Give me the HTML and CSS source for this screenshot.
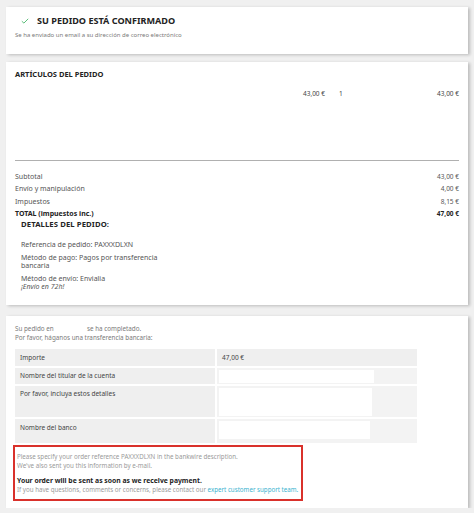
FILE: index.html
```html
<!DOCTYPE html>
<html lang="es">
<head>
<meta charset="utf-8">
<title>Pedido confirmado</title>
<link rel="stylesheet" href="styles.css">
</head>
<body>
<main class="page">
  <section class="card card-confirm">
    <h1 class="confirm-title">
      <svg class="check" viewBox="0 0 8 6" width="8" height="6" aria-hidden="true"><path d="M0.8 3.2 L2.9 5.1 L7.2 0.8" fill="none" stroke="#5cbf7a" stroke-width="1"/></svg>
      SU PEDIDO ESTÁ CONFIRMADO
    </h1>
    <p class="confirm-sub">Se ha enviado un email a su dirección de correo electrónico</p>
  </section>

  <section class="card card-order">
    <h2 class="section-title">ARTÍCULOS DEL PEDIDO</h2>
    <div class="item">
      <div class="item-info"></div>
      <div class="item-price">43,00 €</div>
      <div class="item-qty">1</div>
      <div class="item-total">43,00 €</div>
    </div>
    <hr class="divider">
    <div class="totals">
      <div class="total-row"><span>Subtotal</span><span>43,00 €</span></div>
      <div class="total-row"><span>Envío y manipulación</span><span>4,00 €</span></div>
      <div class="total-row"><span>Impuestos</span><span>8,15 €</span></div>
      <div class="total-row grand"><span>TOTAL (impuestos inc.)</span><span>47,00 €</span></div>
    </div>
    <div class="details">
      <h3 class="details-title">DETALLES DEL PEDIDO:</h3>
      <ul class="details-list">
        <li>Referencia de pedido: PAXXXDLXN</li>
        <li>Método de pago: Pagos por transferencia bancaria</li>
        <li>Método de envío: Envialia<br><em>¡Envío en 72h!</em></li>
      </ul>
    </div>
  </section>

  <section class="card card-payment">
    <p class="pay-intro">Su pedido en <span class="shop-name"></span> se ha completado.<br>Por favor, háganos una transferencia bancaria:</p>
    <div class="bank-table">
      <div class="bank-row row-amount">
        <div class="bank-label">Importe</div>
        <div class="bank-value">47,00 €</div>
      </div>
      <div class="bank-row row-owner">
        <div class="bank-label">Nombre del titular de la cuenta</div>
        <div class="bank-value"><span class="blank-box box-owner"></span></div>
      </div>
      <div class="bank-row row-details">
        <div class="bank-label">Por favor, incluya estos detalles</div>
        <div class="bank-value"><span class="blank-box box-details"></span></div>
      </div>
      <div class="bank-row row-bank">
        <div class="bank-label">Nombre del banco</div>
        <div class="bank-value"><span class="blank-box box-bank"></span></div>
      </div>
    </div>
    <div class="notice">
      <p class="notice-muted">Please specify your order reference PAXXXDLXN in the bankwire description.<br>We've also sent you this information by e-mail.</p>
      <p class="notice-strong">Your order will be sent as soon as we receive payment.</p>
      <p class="notice-muted">If you have questions, comments or concerns, please contact our <a class="link" href="#">expert customer support team.</a></p>
    </div>
  </section>
</main>
</body>
</html>
```

FILE: styles.css
```css
* { box-sizing: border-box; }

html, body {
  margin: 0;
  padding: 0;
  background: #f0f0f0;
  font-family: "Noto Sans", "Open Sans", "DejaVu Sans", sans-serif;
  color: #555;
  font-size: 7px;
}

.page {
  display: flex;
  flex-direction: column;
  padding: 7px 6px 0 6px;
}

.card {
  background: #fff;
  box-shadow: 2px 1px 3px rgba(0, 0, 0, 0.22);
}

/* ---- confirmation ---- */
.card-confirm {
  height: 47px;
  padding: 7px 9px 0 9px;
}

.confirm-title {
  margin: 0;
  display: flex;
  align-items: center;
  font-size: 9.1px;
  line-height: 14px;
  font-weight: 700;
  color: #232323;
  padding-left: 6px;
}

.check {
  margin-right: 8px;
  display: block;
}

.confirm-sub {
  margin: 3px 0 0 0;
  font-size: 6px;
  line-height: 9px;
  color: #7a7a7a;
}

/* ---- order ---- */
.card-order {
  margin-top: 8px;
  height: 243px;
  padding: 8px 9px 0 9px;
}

.section-title {
  margin: 0;
  font-size: 7.5px;
  line-height: 9px;
  font-weight: 700;
  color: #232323;
}

.item {
  display: flex;
  align-items: flex-start;
  height: 81px;
  padding-top: 10px;
  line-height: 9px;
  font-size: 6.5px;
  color: #444;
}

.item-info { flex: 1; }
.item-price { width: 80px; text-align: right; }
.item-qty { width: 16px; padding-left: 14px; }
.item-total { width: 118px; text-align: right; }

.divider {
  margin: 0;
  border: 0;
  border-top: 1px solid #b0b0b0;
}

.totals {
  padding-top: 10px;
}

.total-row {
  display: flex;
  justify-content: space-between;
  line-height: 12.3px;
  font-size: 7px;
  color: #555;
}

.total-row span:last-child { font-size: 6.5px; }

.total-row.grand {
  font-weight: 700;
  color: #232323;
}

.details {
  padding-left: 6px;
}

.details-title {
  margin: -1px 0 0 0;
  font-size: 7.7px;
  line-height: 10px;
  font-weight: 700;
  color: #232323;
  letter-spacing: 0.1px;
}

.details-list {
  list-style: none;
  margin: 12px 0 0 0;
  padding: 0;
  width: 140px;
  font-size: 7px;
  line-height: 8.3px;
  color: #555;
}

.details-list li + li { margin-top: 4.5px; }

.details-list em { font-style: italic; }

/* ---- payment ---- */
.card-payment {
  margin-top: 11px;
  height: 192px;
  padding: 8px 9px 0 9px;
}

.pay-intro {
  margin: 0;
  font-size: 6.3px;
  line-height: 9px;
  color: #7a7a7a;
}

.shop-name {
  display: inline-block;
  width: 30px;
}

.bank-table {
  margin-top: 7px;
  width: 402px;
  display: flex;
  flex-direction: column;
  gap: 2px;
}

.bank-row {
  display: grid;
  grid-template-columns: 200px 200px;
  column-gap: 2px;
}

.bank-label,
.bank-value {
  background: #efefef;
  padding: 0 5px;
  font-size: 6.5px;
  color: #444;
}

.row-amount .bank-label,
.row-amount .bank-value { height: 17px; line-height: 17px; }

.row-owner .bank-label { height: 16px; line-height: 16px; }
.row-details .bank-label { height: 31px; line-height: 16px; }
.row-bank .bank-label { height: 24px; line-height: 18px; }

.row-owner .bank-value,
.row-details .bank-value,
.row-bank .bank-value {
  background: #f3f3f3;
  padding: 2px 0 0 2px;
}

.blank-box {
  display: block;
  background: #fff;
}

.box-owner { width: 155px; height: 13px; }
.box-details { width: 153px; height: 28px; }
.box-bank { width: 151px; height: 18px; }

.notice {
  margin-top: 2px;
  margin-left: -2px;
  width: 290px;
  border: 2px solid #d9312b;
  padding: 5px 2px 5px 2px;
  font-size: 6.2px;
  line-height: 9px;
  color: #9a9a9a;
}

.notice p { margin: 0; }

.notice-strong {
  margin-top: 6px !important;
  font-weight: 700;
  color: #232323;
  font-size: 6.8px;
}

.link {
  color: #3ab3cf;
  text-decoration: none;
}
```
